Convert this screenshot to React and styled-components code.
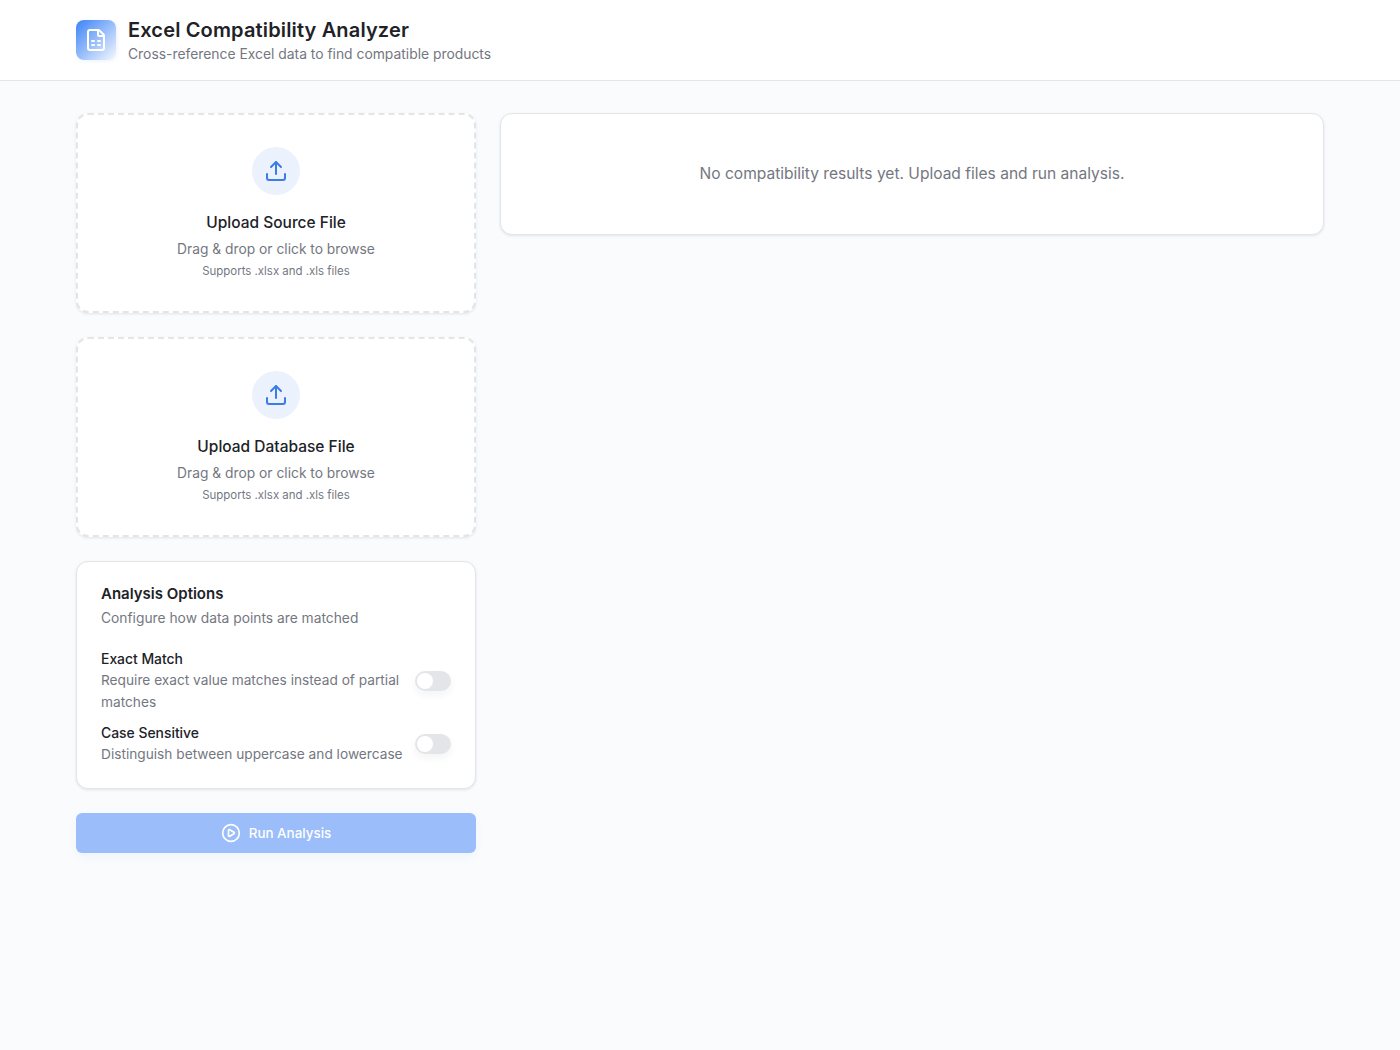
import React from 'react'
import styled, { createGlobalStyle } from 'styled-components'
import { FileSpreadsheet, Upload, CirclePlay } from 'lucide-react'

const GlobalStyle = createGlobalStyle`
  * { box-sizing: border-box; }
  body {
    margin: 0;
    background: #fafbfd;
    font-family: Inter, "Noto Sans", "Liberation Sans", sans-serif;
    color: #202227;
  }
`

const Page = styled.div`
  min-height: 1050px;
  background: #fafbfd;
`

const Header = styled.header`
  height: 81px;
  background: #fff;
  border-bottom: 1px solid #e3e5e9;
  padding: 0 76px;
  display: flex;
  align-items: center;
  gap: 12px;
`

const Logo = styled.div`
  width: 40px;
  height: 40px;
  border-radius: 8px;
  background: linear-gradient(135deg, #3b82f6 0%, #f4f8fe 100%);
  box-shadow: 1px 1px 4px rgba(147, 183, 248, 0.18);
  color: #fff;
  display: flex;
  align-items: center;
  justify-content: center;
`

const TitleBlock = styled.div`
  display: flex;
  flex-direction: column;
`

const Title = styled.h1`
  margin: 0;
  font-size: 20px;
  line-height: 28px;
  font-weight: 600;
  letter-spacing: 0.15px;
`

const Subtitle = styled.p`
  margin: 0;
  font-size: 13.87px;
  line-height: 20px;
  color: #74777f;
`

const Main = styled.main`
  padding: 32px 76px;
  display: grid;
  grid-template-columns: 400px 824px;
  gap: 24px;
  align-items: start;
`

const LeftColumn = styled.div`
  display: flex;
  flex-direction: column;
  gap: 24px;
`

const DropZone = styled.div`
  height: 200px;
  background: #fff;
  border: 2px dashed #e3e5e9;
  border-radius: 12px;
  box-shadow: 0 1px 3px rgba(20, 30, 50, 0.1);
  padding: 32px 24px;
  display: flex;
  flex-direction: column;
  align-items: center;
`

const IconCircle = styled.div`
  flex: none;
  width: 48px;
  height: 48px;
  border-radius: 50%;
  background: #ebf2fe;
  color: #3b7ce8;
  display: flex;
  align-items: center;
  justify-content: center;
  margin-bottom: 16px;
`

const DropTitle = styled.div`
  font-size: 15.5px;
  line-height: 24px;
  font-weight: 500;
  margin-bottom: 4px;
`

const DropHint = styled.div`
  font-size: 13.8px;
  line-height: 20px;
  color: #74777f;
  margin-bottom: 4px;
`

const DropNote = styled.div`
  font-size: 11.45px;
  line-height: 16px;
  color: #74777f;
`

const Card = styled.section`
  background: #fff;
  border: 1px solid #e3e5e9;
  border-radius: 12px;
  box-shadow: 0 1px 3px rgba(20, 30, 50, 0.1);
`

const OptionsCard = styled(Card)`
  height: 228px;
  padding: 20px 24px;
`

const CardTitle = styled.h2`
  margin: 0 0 2px;
  font-size: 15px;
  line-height: 24px;
  font-weight: 600;
`

const CardHint = styled.p`
  margin: 0 0 21px;
  font-size: 13.8px;
  line-height: 20px;
  color: #74777f;
`

const OptionList = styled.div`
  display: flex;
  flex-direction: column;
  gap: 10px;
`

const OptionRow = styled.div`
  display: flex;
  align-items: center;
  justify-content: space-between;
  gap: 12px;

  &:last-child {
    padding-bottom: 2px;
  }
`

const OptionLabel = styled.div`
  font-size: 13.9px;
  line-height: 20px;
  font-weight: 450;
`

const OptionText = styled.div`
  font-size: 13.7px;
  line-height: 22px;
  color: #74777f;
`

const Toggle = styled.div`
  flex: none;
  width: 36px;
  height: 20px;
  padding: 2px;
  border-radius: 10px;
  background: #e3e5e9;
  box-shadow: 0 4px 8px rgba(20, 30, 50, 0.05);
`

const Knob = styled.div`
  width: 16px;
  height: 16px;
  border-radius: 50%;
  background: #fff;
`

const RunButton = styled.button`
  height: 40px;
  width: 100%;
  border: 0;
  border-radius: 6px;
  background: #9bbdf9;
  color: #fff;
  font: 500 13.4px Inter, "Noto Sans", sans-serif;
  box-shadow: 0 4px 8px rgba(59, 130, 246, 0.06);
  display: flex;
  align-items: center;
  justify-content: center;
  gap: 8px;
`

const EmptyCard = styled(Card)`
  height: 122px;
  padding-top: 48px;
  text-align: center;
  font-size: 15.55px;
  line-height: 24px;
  color: #74777f;
`

const UploadCard = ({ title }) => (
  <DropZone>
    <IconCircle>
      <Upload size={24} strokeWidth={2} />
    </IconCircle>
    <DropTitle>{title}</DropTitle>
    <DropHint>Drag &amp; drop or click to browse</DropHint>
    <DropNote>Supports .xlsx and .xls files</DropNote>
  </DropZone>
)

const Option = ({ label, text }) => (
  <OptionRow>
    <div>
      <OptionLabel>{label}</OptionLabel>
      <OptionText>{text}</OptionText>
    </div>
    <Toggle>
      <Knob />
    </Toggle>
  </OptionRow>
)

export default function App() {
  return (
    <Page>
      <GlobalStyle />
      <Header>
        <Logo>
          <FileSpreadsheet size={24} strokeWidth={2} />
        </Logo>
        <TitleBlock>
          <Title>Excel Compatibility Analyzer</Title>
          <Subtitle>Cross-reference Excel data to find compatible products</Subtitle>
        </TitleBlock>
      </Header>
      <Main>
        <LeftColumn>
          <UploadCard title="Upload Source File" />
          <UploadCard title="Upload Database File" />
          <OptionsCard>
            <CardTitle>Analysis Options</CardTitle>
            <CardHint>Configure how data points are matched</CardHint>
            <OptionList>
              <Option label="Exact Match" text="Require exact value matches instead of partial matches" />
              <Option label="Case Sensitive" text="Distinguish between uppercase and lowercase" />
            </OptionList>
          </OptionsCard>
          <RunButton>
            <CirclePlay size={20} strokeWidth={2} />
            Run Analysis
          </RunButton>
        </LeftColumn>
        <EmptyCard>No compatibility results yet. Upload files and run analysis.</EmptyCard>
      </Main>
    </Page>
  )
}
